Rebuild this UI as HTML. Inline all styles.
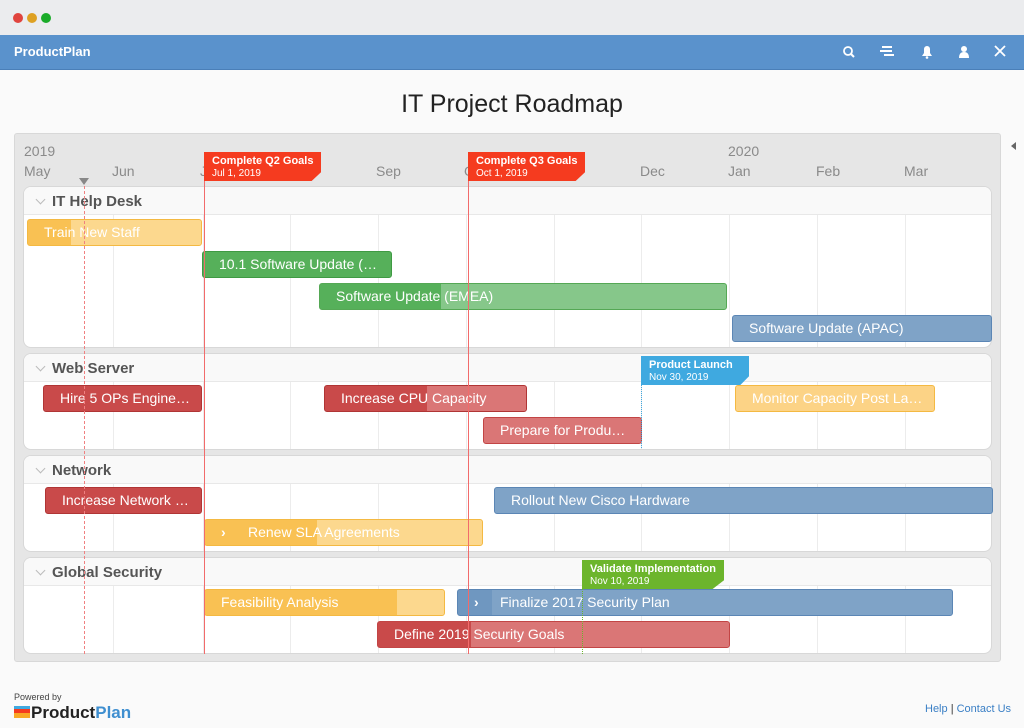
<!DOCTYPE html>
<html><head><meta charset="utf-8"><style>
*{box-sizing:border-box;margin:0;padding:0}
body{width:1024px;height:728px;position:relative;overflow:hidden;background:#fafafa;font-family:"Liberation Sans",Arial,sans-serif}
.a{position:absolute}
.chrome{left:0;top:0;width:1024px;height:35px;background:#ebecee}
.dot{width:10px;height:10px;border-radius:50%;top:13px}
.hdr{left:0;top:35px;width:1024px;height:35px;background:#5a92cc;border-bottom:1px solid #4a7fb8}
.title{left:0;width:1024px;top:90px;text-align:center;font-size:25px;color:#222}
.chart{left:14px;top:133px;width:987px;height:529px;background:#e6e6e6;border:1px solid #d8d8d8;border-radius:3px}
.mo{font-size:14px;color:#8a8a8a}
.lane{left:23px;width:969px;background:#fff;border:1px solid #d8d8d8;border-radius:8px;overflow:hidden}
.lh{position:absolute;left:0;top:0;width:100%;height:28px;background:#f9f9f9;border-bottom:1px solid #e8e8e8;font-size:15px;font-weight:bold;color:#555;padding:6px 0 0 28px}
.lh:before{content:"";position:absolute;left:13px;top:9px;width:6px;height:6px;border-right:1.5px solid #bbb;border-bottom:1.5px solid #bbb;transform:rotate(45deg)}
.g{position:absolute;top:28px;bottom:0;width:1px;background:#ececec}
.bar{position:absolute;height:27px;border-radius:3px;color:#fff;font-size:14px;line-height:25px;padding-left:16px;white-space:nowrap;overflow:hidden}
.r{background:#c94a4a;border:1px solid #b03535}
.lr{background:#da7676;border:1px solid #c24545}
.y{background:#fcd386;border:1px solid #f4b942}
.gr{background:#85c585;border:1px solid #55a855}
.b{background:#7fa3c7;border:1px solid #5b86b5}
.ms{position:absolute;height:29px;color:#fff;font-size:10px;padding:3px 0 0 8px;line-height:12px;clip-path:polygon(0 0,100% 0,100% 70%,92% 100%,0 100%)}
.ms b{font-size:11px}
</style></head><body>
<div class="a chrome"></div>
<div class="a dot" style="left:13px;background:#e0443e"></div>
<div class="a dot" style="left:27px;background:#dea123"></div>
<div class="a dot" style="left:41px;background:#1aab29"></div>
<div class="a hdr"></div>
<div class="a" style="left:14px;top:44px;color:#fff;font-weight:bold;font-size:13px">ProductPlan</div>
<svg class="a" style="left:840px;top:44px" width="170" height="16" fill="#fff" stroke="#fff">
<circle cx="8" cy="7" r="4" fill="none" stroke-width="1.8"/><line x1="11" y1="10" x2="14" y2="13" stroke-width="2"/>
<rect x="42" y="2" width="10" height="2" stroke="none"/><rect x="40" y="6" width="12" height="2" stroke="none"/><rect x="44" y="10" width="10" height="2" stroke="none"/>
<path d="M82 12 L92 12 L90 9 L90 5 A3 3 0 0 0 84 5 L84 9 Z" stroke="none"/><circle cx="87" cy="13.5" r="1.3" stroke="none"/>
<circle cx="124" cy="5" r="3" stroke="none"/><path d="M119 14 Q119 8 124 8 Q129 8 129 14Z" stroke="none"/>
<path d="M155 2 L165 12 M165 2 L155 12" stroke-width="1.8"/>
</svg>
<div class="a title">IT Project Roadmap</div>
<div class="a" style="left:1011px;top:142px;width:0;height:0;border-right:5px solid #666;border-top:4px solid transparent;border-bottom:4px solid transparent"></div>
<div class="a chart"></div>
<div class="a mo" style="left:24px;top:143px">2019</div>
<div class="a mo" style="left:728px;top:143px">2020</div>
<div class="a mo" style="left:24px;top:163px">May</div>
<div class="a mo" style="left:112px;top:163px">Jun</div>
<div class="a mo" style="left:200px;top:163px">Jul</div>
<div class="a mo" style="left:376px;top:163px">Sep</div>
<div class="a mo" style="left:464px;top:163px">Oct</div>
<div class="a mo" style="left:640px;top:163px">Dec</div>
<div class="a mo" style="left:728px;top:163px">Jan</div>
<div class="a mo" style="left:816px;top:163px">Feb</div>
<div class="a mo" style="left:904px;top:163px">Mar</div>
<div class="a" style="left:79px;top:178px;border-top:7px solid #888;border-left:5px solid transparent;border-right:5px solid transparent"></div>

<div class="a lane" style="top:186px;height:162px"><div class="lh">IT Help Desk</div>
<div class="g" style="left:89px"></div><div class="g" style="left:179px"></div><div class="g" style="left:266px"></div><div class="g" style="left:354px"></div><div class="g" style="left:442px"></div><div class="g" style="left:530px"></div><div class="g" style="left:617px"></div><div class="g" style="left:705px"></div><div class="g" style="left:793px"></div><div class="g" style="left:881px"></div></div>
<div class="a lane" style="top:353px;height:97px"><div class="lh">Web Server</div>
<div class="g" style="left:89px"></div><div class="g" style="left:179px"></div><div class="g" style="left:266px"></div><div class="g" style="left:354px"></div><div class="g" style="left:442px"></div><div class="g" style="left:530px"></div><div class="g" style="left:617px"></div><div class="g" style="left:705px"></div><div class="g" style="left:793px"></div><div class="g" style="left:881px"></div></div>
<div class="a lane" style="top:455px;height:97px"><div class="lh">Network</div>
<div class="g" style="left:89px"></div><div class="g" style="left:179px"></div><div class="g" style="left:266px"></div><div class="g" style="left:354px"></div><div class="g" style="left:442px"></div><div class="g" style="left:530px"></div><div class="g" style="left:617px"></div><div class="g" style="left:705px"></div><div class="g" style="left:793px"></div><div class="g" style="left:881px"></div></div>
<div class="a lane" style="top:557px;height:97px"><div class="lh">Global Security</div>
<div class="g" style="left:89px"></div><div class="g" style="left:179px"></div><div class="g" style="left:266px"></div><div class="g" style="left:354px"></div><div class="g" style="left:442px"></div><div class="g" style="left:530px"></div><div class="g" style="left:617px"></div><div class="g" style="left:705px"></div><div class="g" style="left:793px"></div><div class="g" style="left:881px"></div></div>

<div class="bar y" style="left:27px;top:219px;width:175px;background:linear-gradient(90deg,#f9c153 43px,#fcd88e 43px)">Train New Staff</div>
<div class="bar gr" style="left:202px;top:251px;width:190px;background:#56b05a;border-color:#3f9a43">10.1 Software Update (…</div>
<div class="bar gr" style="left:319px;top:283px;width:408px;background:linear-gradient(90deg,#56b05a 121px,#86c78a 121px)">Software Update (EMEA)</div>
<div class="bar b" style="left:732px;top:315px;width:260px">Software Update (APAC)</div>

<div class="bar r" style="left:43px;top:385px;width:159px">Hire 5 OPs Engine…</div>
<div class="bar r" style="left:324px;top:385px;width:203px;background:linear-gradient(90deg,#c94a4a 102px,#da7676 102px)">Increase CPU Capacity</div>
<div class="bar lr" style="left:483px;top:417px;width:159px">Prepare for Produ…</div>
<div class="bar y" style="left:735px;top:385px;width:200px">Monitor Capacity Post La…</div>

<div class="bar r" style="left:45px;top:487px;width:157px">Increase Network …</div>
<div class="bar b" style="left:494px;top:487px;width:499px">Rollout New Cisco Hardware</div>
<div class="bar y" style="left:204px;top:519px;width:279px;padding-left:43px;background:linear-gradient(90deg,#f9c153 112px,#fcd88e 112px)"><span style="position:absolute;left:16px;font-weight:bold">›</span>Renew SLA Agreements</div>

<div class="bar y" style="left:204px;top:589px;width:241px;background:linear-gradient(90deg,#f9c153 192px,#fcd88e 192px)">Feasibility Analysis</div>
<div class="bar b" style="left:457px;top:589px;width:496px;padding-left:42px;background:linear-gradient(90deg,#6f97c0 34px,#7fa3c7 34px)"><span style="position:absolute;left:16px;font-weight:bold">›</span>Finalize 2017 Security Plan</div>
<div class="bar lr" style="left:377px;top:621px;width:353px;background:linear-gradient(90deg,#c94a4a 93px,#da7676 93px)">Define 2019 Security Goals</div>

<div class="a" style="left:84px;top:186px;height:468px;border-left:1px dashed #f08080"></div>
<div class="a" style="left:204px;top:152px;width:1px;height:502px;background:#f26b6b"></div>
<div class="a" style="left:468px;top:152px;width:1px;height:502px;background:#f26b6b"></div>
<div class="a" style="left:641px;top:356px;height:92px;border-left:1px dotted #3fa9e0"></div>
<div class="a" style="left:582px;top:560px;height:94px;border-left:1px dotted #6cb52c"></div>

<div class="ms" style="left:204px;top:152px;width:117px;background:#f53b1f"><b>Complete Q2 Goals</b><br>Jul 1, 2019</div>
<div class="ms" style="left:468px;top:152px;width:117px;background:#f53b1f"><b>Complete Q3 Goals</b><br>Oct 1, 2019</div>
<div class="ms" style="left:641px;top:356px;width:108px;background:#3fa9e0"><b>Product Launch</b><br>Nov 30, 2019</div>
<div class="ms" style="left:582px;top:560px;width:142px;background:#6cb52c"><b>Validate Implementation</b><br>Nov 10, 2019</div>

<div class="a" style="left:14px;top:692px;font-size:9px;color:#444">Powered by</div>
<div class="a" style="left:14px;top:706px;width:16px;height:12px;background:linear-gradient(#3fa9e0 0 3px,#f53b1f 3px 7px,#f9a825 7px)"></div>
<div class="a" style="left:31px;top:703px;font-size:17px;font-weight:bold;color:#222">Product<span style="color:#3f8fd0">Plan</span></div>
<div class="a" style="left:925px;top:703px;font-size:11px;color:#3a7fc5">Help <span style="color:#333">|</span> Contact Us</div>
</body></html>
